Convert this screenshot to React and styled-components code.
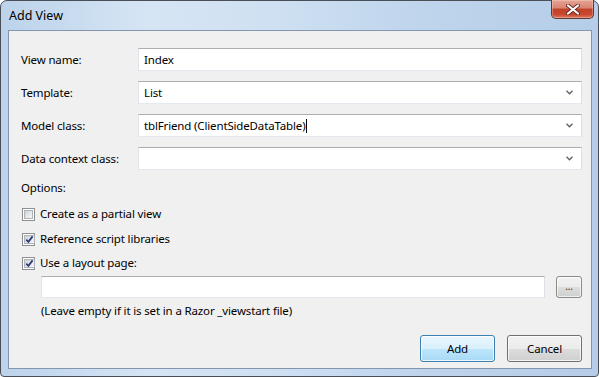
import React from "react";
import styled, { createGlobalStyle } from "styled-components";

const Global = createGlobalStyle`
  html, body {
    margin: 0;
    padding: 0;
    background: #ffffff;
  }
  body {
    font-family: "Noto Sans", "Open Sans", sans-serif;
    font-size: 11.5px;
    letter-spacing: -0.15px;
    color: #000;
  }
`;

const Frame = styled.div`
  width: 599px;
  height: 377px;
  box-sizing: border-box;
  border: 1px solid #4a4f57;
  border-radius: 7px 7px 4px 4px;
  background: linear-gradient(
    to right,
    #bcd3eb 0%,
    #d6e5f4 25%,
    #cfe0f2 45%,
    #bfd5ec 70%,
    #b5cde8 100%
  );
  display: flex;
  flex-direction: column;
  position: relative;
`;

const TitleBar = styled.div`
  height: 29px;
  display: flex;
  align-items: center;
  padding-left: 8px;
  font-size: 12.5px;
  letter-spacing: 0;
  color: #000;
`;

const CloseButton = styled.div`
  position: absolute;
  top: -1px;
  right: 4px;
  width: 43px;
  height: 19px;
  box-sizing: border-box;
  border: 1px solid #5b3a36;
  border-top: none;
  border-radius: 0 0 5px 5px;
  background: linear-gradient(
    to bottom,
    #e6a497 0%,
    #d88370 45%,
    #c0412a 50%,
    #c9472e 80%,
    #dd7a5e 100%
  );
  box-shadow: inset 0 0 0 1px rgba(255, 220, 210, 0.35);
  display: flex;
  align-items: center;
  justify-content: center;
`;

const Client = styled.div`
  flex: 1;
  margin: 0 6px 7px 7px;
  border: 1px solid #8496ad;
  background: #f0f0f0;
  padding: 17px 9px 0 12px;
  display: flex;
  flex-direction: column;
`;

const Grid = styled.div`
  display: grid;
  grid-template-columns: 117px 1fr;
  row-gap: 10px;
  align-items: center;
`;

const Label = styled.div`
  line-height: 16px;
`;

const Field = styled.div`
  height: 23px;
  box-sizing: border-box;
  background: #fff;
  border: 1px solid;
  border-color: #abadb3 #dbdfe6 #e3e9ef #e2e3ea;
  display: flex;
  align-items: center;
  padding: 0 5px;
  position: relative;
`;

const FieldText = styled.span`
  flex: 1;
  white-space: nowrap;
`;

const Caret = styled.span`
  display: inline-block;
  width: 1px;
  height: 14px;
  background: #000;
  vertical-align: middle;
  margin-left: 1px;
`;

const Arrow = styled.svg`
  width: 7px;
  height: 5px;
  margin-right: 3px;
`;

const Section = styled.div`
  margin-top: 10px;
  line-height: 16px;
`;

const CheckRow = styled.label`
  display: flex;
  align-items: center;
  gap: 5px;
  margin-top: ${(p) => p.$gap}px;
  margin-left: 1px;
  line-height: 16px;
`;

const Box = styled.span`
  width: 13px;
  height: 13px;
  box-sizing: border-box;
  border: 1px solid #8e8f8f;
  background: #fff;
  padding: 1px;
  display: flex;
`;

const BoxFill = styled.span`
  flex: 1;
  background: linear-gradient(135deg, #cbcfd5 0%, #e4e6ea 50%, #f6f6f6 100%);
  border: 1px solid #aeb3b9;
  display: flex;
  align-items: center;
  justify-content: center;
`;

const PathRow = styled.div`
  display: flex;
  align-items: center;
  gap: 11px;
  margin: 5px 0 0 20px;
`;

const PathField = styled(Field)`
  flex: 1;
  height: 22px;
`;

const SmallButton = styled.div`
  width: 26px;
  height: 22px;
  box-sizing: border-box;
  border: 1px solid #8a8a8a;
  border-radius: 3px;
  background: linear-gradient(to bottom, #f2f2f2 0%, #ebebeb 50%, #dddddd 51%, #cfcfcf 100%);
  box-shadow: inset 0 0 0 1px rgba(255, 255, 255, 0.7);
  display: flex;
  align-items: center;
  justify-content: center;
  font-size: 10px;
  color: #333;
  line-height: 1;
  padding-bottom: 3px;
`;

const Hint = styled.div`
  margin: 5px 0 0 20px;
  line-height: 16px;
`;

const Footer = styled.div`
  margin-top: auto;
  margin-bottom: 6px;
  display: flex;
  justify-content: flex-end;
  gap: 12px;
`;

const Button = styled.div`
  width: 75px;
  height: 27px;
  box-sizing: border-box;
  border: 1px solid ${(p) => (p.$primary ? "#3c7fb1" : "#707070")};
  border-radius: 3px;
  background: ${(p) =>
    p.$primary
      ? "linear-gradient(to bottom, #eaf6fd 0%, #d9f0fc 50%, #bee6fd 51%, #a7d9f5 100%)"
      : "linear-gradient(to bottom, #f2f2f2 0%, #ebebeb 50%, #dddddd 51%, #cfcfcf 100%)"};
  box-shadow: inset 0 0 0 1px rgba(255, 255, 255, 0.75);
  display: flex;
  align-items: center;
  justify-content: center;
`;

function ComboArrow() {
  return (
    <Arrow viewBox="0 0 7 5">
      <path d="M0.5 0.8 L3.5 3.8 L6.5 0.8" fill="none" stroke="#606060" strokeWidth="1.3" />
    </Arrow>
  );
}

function CheckBox({ checked }) {
  return (
    <Box>
      <BoxFill>
        {checked && (
          <svg width="9" height="9" viewBox="0 0 9 9">
            <path d="M1.3 4.6 L3.4 6.9 L7.6 1.4" fill="none" stroke="#2c3f7a" strokeWidth="1.8" />
          </svg>
        )}
      </BoxFill>
    </Box>
  );
}

export default function App() {
  return (
    <>
      <Global />
      <Frame>
        <TitleBar>Add View</TitleBar>
        <CloseButton>
          <svg width="14" height="11" viewBox="0 0 14 11">
            <path d="M2 1.5 L12 9.5 M12 1.5 L2 9.5" stroke="#6a2a20" strokeWidth="4" strokeLinecap="round" />
            <path d="M2 1.5 L12 9.5 M12 1.5 L2 9.5" stroke="#ffffff" strokeWidth="2.2" strokeLinecap="round" />
          </svg>
        </CloseButton>
        <Client>
          <Grid>
            <Label>View name:</Label>
            <Field>
              <FieldText>Index</FieldText>
            </Field>
            <Label>Template:</Label>
            <Field>
              <FieldText>List</FieldText>
              <ComboArrow />
            </Field>
            <Label>Model class:</Label>
            <Field>
              <FieldText>
                tblFriend (ClientSideDataTable)
                <Caret />
              </FieldText>
              <ComboArrow />
            </Field>
            <Label>Data context class:</Label>
            <Field>
              <FieldText />
              <ComboArrow />
            </Field>
          </Grid>
          <Section>Options:</Section>
          <CheckRow $gap={10}>
            <CheckBox />
            Create as a partial view
          </CheckRow>
          <CheckRow $gap={9}>
            <CheckBox checked />
            Reference script libraries
          </CheckRow>
          <CheckRow $gap={8}>
            <CheckBox checked />
            Use a layout page:
          </CheckRow>
          <PathRow>
            <PathField />
            <SmallButton>...</SmallButton>
          </PathRow>
          <Hint>(Leave empty if it is set in a Razor _viewstart file)</Hint>
          <Footer>
            <Button $primary>Add</Button>
            <Button>Cancel</Button>
          </Footer>
        </Client>
      </Frame>
    </>
  );
}
